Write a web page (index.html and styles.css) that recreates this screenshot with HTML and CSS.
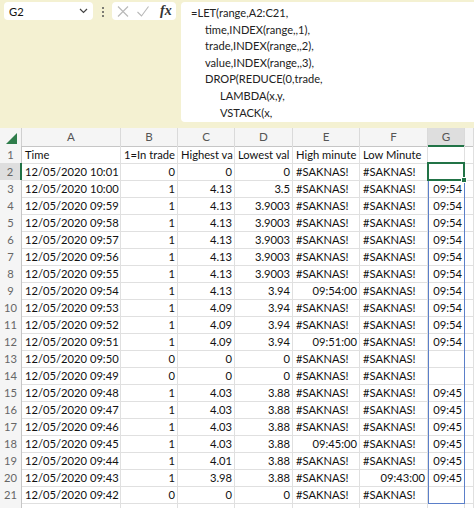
FILE: index.html
```html
<!DOCTYPE html>
<html lang="sv">
<head>
    <meta charset="UTF-8">
    <meta name="viewport" content="width=device-width, initial-scale=1.0">
    <title>Excel - LET / REDUCE</title>
    <link rel="stylesheet" href="styles.css">
</head>
<body>
    <!-- Formula bar -->
    <div class="formula-bar">
        <div class="name-box">
            <span>G2</span>
            <svg width="9" height="6" viewBox="0 0 9 6"><polyline points="1,1 4.5,4.5 8,1" fill="none" stroke="#444" stroke-width="1.2"/></svg>
        </div>
        <div class="dots"><i></i><i></i><i></i></div>
        <div class="fx-box">
            <svg class="icon-x" width="12" height="11" viewBox="0 0 12 11"><path d="M1 0.5 L11 10.5 M11 0.5 L1 10.5" stroke="#b8b8b8" stroke-width="1.1" fill="none"/></svg>
            <svg class="icon-ok" width="12" height="11" viewBox="0 0 12 11"><polyline points="0.5,6 4.5,10 11.5,0.5" stroke="#b8b8b8" stroke-width="1.1" fill="none"/></svg>
            <span class="fx">fx</span>
        </div>
        <div class="formula">
            <div>=LET(range,A2:C21,</div>
            <div class="in1">time,INDEX(range,,1),</div>
            <div class="in1">trade,INDEX(range,,2),</div>
            <div class="in1">value,INDEX(range,,3),</div>
            <div class="in1">DROP(REDUCE(0,trade,</div>
            <div class="in2">LAMBDA(x,y,</div>
            <div class="in2">VSTACK(x,</div>
        </div>
    </div>

    <!-- Sheet grid -->
    <div class="sheet">
        <div class="row head">
            <div class="corner"><svg width="11" height="11" viewBox="0 0 11 11"><polygon points="11,0 11,11 0,11" fill="#2f7d4b"/></svg></div>
            <div class="ch">A</div><div class="ch">B</div><div class="ch">C</div><div class="ch">D</div>
            <div class="ch">E</div><div class="ch">F</div><div class="ch active">G</div><div class="ch"></div>
        </div>
        <div class="row"><div class="rh">1</div><div class="c">Time</div><div class="c">1=In trade</div><div class="c">Highest va</div><div class="c">Lowest val</div><div class="c">High minute</div><div class="c">Low Minute</div><div class="c g"></div><div class="c"></div></div>
        <div class="row"><div class="rh active">2</div><div class="c n">12/05/2020 10:01</div><div class="c n">0</div><div class="c n">0</div><div class="c n">0</div><div class="c">#SAKNAS!</div><div class="c">#SAKNAS!</div><div class="c n g sp sel"></div><div class="c"></div></div>
        <div class="row"><div class="rh">3</div><div class="c n">12/05/2020 10:00</div><div class="c n">1</div><div class="c n">4.13</div><div class="c n">3.5</div><div class="c">#SAKNAS!</div><div class="c">#SAKNAS!</div><div class="c n g sp">09:54</div><div class="c"></div></div>
        <div class="row"><div class="rh">4</div><div class="c n">12/05/2020 09:59</div><div class="c n">1</div><div class="c n">4.13</div><div class="c n">3.9003</div><div class="c">#SAKNAS!</div><div class="c">#SAKNAS!</div><div class="c n g sp">09:54</div><div class="c"></div></div>
        <div class="row"><div class="rh">5</div><div class="c n">12/05/2020 09:58</div><div class="c n">1</div><div class="c n">4.13</div><div class="c n">3.9003</div><div class="c">#SAKNAS!</div><div class="c">#SAKNAS!</div><div class="c n g sp">09:54</div><div class="c"></div></div>
        <div class="row"><div class="rh">6</div><div class="c n">12/05/2020 09:57</div><div class="c n">1</div><div class="c n">4.13</div><div class="c n">3.9003</div><div class="c">#SAKNAS!</div><div class="c">#SAKNAS!</div><div class="c n g sp">09:54</div><div class="c"></div></div>
        <div class="row"><div class="rh">7</div><div class="c n">12/05/2020 09:56</div><div class="c n">1</div><div class="c n">4.13</div><div class="c n">3.9003</div><div class="c">#SAKNAS!</div><div class="c">#SAKNAS!</div><div class="c n g sp">09:54</div><div class="c"></div></div>
        <div class="row"><div class="rh">8</div><div class="c n">12/05/2020 09:55</div><div class="c n">1</div><div class="c n">4.13</div><div class="c n">3.9003</div><div class="c">#SAKNAS!</div><div class="c">#SAKNAS!</div><div class="c n g sp">09:54</div><div class="c"></div></div>
        <div class="row"><div class="rh">9</div><div class="c n">12/05/2020 09:54</div><div class="c n">1</div><div class="c n">4.13</div><div class="c n">3.94</div><div class="c n">09:54:00</div><div class="c">#SAKNAS!</div><div class="c n g sp">09:54</div><div class="c"></div></div>
        <div class="row"><div class="rh">10</div><div class="c n">12/05/2020 09:53</div><div class="c n">1</div><div class="c n">4.09</div><div class="c n">3.94</div><div class="c">#SAKNAS!</div><div class="c">#SAKNAS!</div><div class="c n g sp">09:54</div><div class="c"></div></div>
        <div class="row"><div class="rh">11</div><div class="c n">12/05/2020 09:52</div><div class="c n">1</div><div class="c n">4.09</div><div class="c n">3.94</div><div class="c">#SAKNAS!</div><div class="c">#SAKNAS!</div><div class="c n g sp">09:54</div><div class="c"></div></div>
        <div class="row"><div class="rh">12</div><div class="c n">12/05/2020 09:51</div><div class="c n">1</div><div class="c n">4.09</div><div class="c n">3.94</div><div class="c n">09:51:00</div><div class="c">#SAKNAS!</div><div class="c n g sp">09:54</div><div class="c"></div></div>
        <div class="row"><div class="rh">13</div><div class="c n">12/05/2020 09:50</div><div class="c n">0</div><div class="c n">0</div><div class="c n">0</div><div class="c">#SAKNAS!</div><div class="c">#SAKNAS!</div><div class="c n g sp"></div><div class="c"></div></div>
        <div class="row"><div class="rh">14</div><div class="c n">12/05/2020 09:49</div><div class="c n">0</div><div class="c n">0</div><div class="c n">0</div><div class="c">#SAKNAS!</div><div class="c">#SAKNAS!</div><div class="c n g sp"></div><div class="c"></div></div>
        <div class="row"><div class="rh">15</div><div class="c n">12/05/2020 09:48</div><div class="c n">1</div><div class="c n">4.03</div><div class="c n">3.88</div><div class="c">#SAKNAS!</div><div class="c">#SAKNAS!</div><div class="c n g sp">09:45</div><div class="c"></div></div>
        <div class="row"><div class="rh">16</div><div class="c n">12/05/2020 09:47</div><div class="c n">1</div><div class="c n">4.03</div><div class="c n">3.88</div><div class="c">#SAKNAS!</div><div class="c">#SAKNAS!</div><div class="c n g sp">09:45</div><div class="c"></div></div>
        <div class="row"><div class="rh">17</div><div class="c n">12/05/2020 09:46</div><div class="c n">1</div><div class="c n">4.03</div><div class="c n">3.88</div><div class="c">#SAKNAS!</div><div class="c">#SAKNAS!</div><div class="c n g sp">09:45</div><div class="c"></div></div>
        <div class="row"><div class="rh">18</div><div class="c n">12/05/2020 09:45</div><div class="c n">1</div><div class="c n">4.03</div><div class="c n">3.88</div><div class="c n">09:45:00</div><div class="c">#SAKNAS!</div><div class="c n g sp">09:45</div><div class="c"></div></div>
        <div class="row"><div class="rh">19</div><div class="c n">12/05/2020 09:44</div><div class="c n">1</div><div class="c n">4.01</div><div class="c n">3.88</div><div class="c">#SAKNAS!</div><div class="c">#SAKNAS!</div><div class="c n g sp">09:45</div><div class="c"></div></div>
        <div class="row"><div class="rh">20</div><div class="c n">12/05/2020 09:43</div><div class="c n">1</div><div class="c n">3.98</div><div class="c n">3.88</div><div class="c">#SAKNAS!</div><div class="c n">09:43:00</div><div class="c n g sp">09:45</div><div class="c"></div></div>
        <div class="row"><div class="rh">21</div><div class="c n">12/05/2020 09:42</div><div class="c n">0</div><div class="c n">0</div><div class="c n">0</div><div class="c">#SAKNAS!</div><div class="c">#SAKNAS!</div><div class="c n g sp last"></div><div class="c"></div></div>
        <div class="row"><div class="rh"></div><div class="c"></div><div class="c"></div><div class="c"></div><div class="c"></div><div class="c"></div><div class="c"></div><div class="c"></div><div class="c"></div></div>
    </div>
</body>
</html>
```

FILE: styles.css
```css
/* Page */
body {
    margin: 0;
    width: 474px;
    height: 508px;
    overflow: hidden;
    background: #fff;
    color: #111;
    font-family: Lato, 'Liberation Sans', sans-serif;
    font-size: 11.2px;
}
/* Formula bar */
.formula-bar {
    height: 128px;
    box-sizing: border-box;
    padding: 2px 0 0 4px;
    background: #f4f1d2;
    display: flex;
    align-items: flex-start;
}
.name-box {
    width: 89px;
    height: 18px;
    box-sizing: border-box;
    padding: 0 5px 0 5px;
    background: #fff;
    border-radius: 4px;
    display: flex;
    align-items: center;
    justify-content: space-between;
    flex-shrink: 0;
}
.dots {
    width: 19px;
    flex-shrink: 0;
    padding-top: 5px;
    display: flex;
    flex-direction: column;
    align-items: center;
    gap: 2px;
}
.dots i {
    width: 2px;
    height: 2px;
    background: #555;
    border-radius: 1px;
}
.fx-box {
    width: 64px;
    height: 18px;
    box-sizing: border-box;
    padding-left: 5px;
    background: #fff;
    border-radius: 4px;
    display: flex;
    align-items: center;
    flex-shrink: 0;
}
.icon-ok {
    margin-left: 8px;
}
.fx {
    margin-left: 11px;
    font-family: 'Liberation Serif', serif;
    font-style: italic;
    font-weight: bold;
    font-size: 14px;
    color: #333;
    line-height: 18px;
}
.formula {
    width: 310px;
    height: 120px;
    margin-left: 5px;
    flex-shrink: 0;
    box-sizing: border-box;
    padding: 3px 0 0 10px;
    background: #fff;
    border-radius: 4px;
    font-size: 11.1px;
    line-height: 16.6px;
    color: #222;
    white-space: nowrap;
}
.formula .in1 {
    padding-left: 14px;
}
.formula .in2 {
    padding-left: 29px;
}
/* Sheet grid */
.row {
    display: grid;
    grid-template-columns: 22px 99px 57px 57px 58px 67px 68px 37px 1fr;
    height: 17px;
}
.row.head {
    height: 18px;
}
.corner {
    background: #f5f5f5;
    border-right: 1px solid #d0d0d0;
    border-bottom: 1px solid #c6c6c6;
    display: flex;
    justify-content: flex-end;
    align-items: flex-end;
    padding: 0 4px 2px 0;
}
.ch {
    background: #f5f5f5;
    border-right: 1px solid #dadada;
    border-bottom: 1px solid #c6c6c6;
    text-align: center;
    color: #555;
    font-size: 11.6px;
    line-height: 18px;
}
.ch.active {
    background: #dedede;
    border-bottom: 2px solid #217346;
    line-height: 17px;
}
.rh {
    background: #f5f5f5;
    border-right: 1px solid #c6c6c6;
    border-bottom: 1px solid #dedede;
    text-align: center;
    color: #666;
    line-height: 17px;
}
.rh.active {
    background: #dedede;
    border-right: 2px solid #217346;
}
.c {
    border-right: 1px solid #e0e0e0;
    border-bottom: 1px solid #e0e0e0;
    padding: 0 2px 0 3px;
    line-height: 17px;
    white-space: nowrap;
    overflow: hidden;
}
.c.n {
    text-align: right;
}
/* Spill range and active cell in column G */
.c.g {
    position: relative;
    overflow: visible;
}
.c.sp {
    box-shadow: inset 1px 0 #5b7fc9;
    border-right-color: #5b7fc9;
}
.c.sp.last {
    border-bottom-color: #5b7fc9;
}
.c.sel {
    z-index: 2;
}
.c.sel::before {
    content: '';
    position: absolute;
    left: -1px;
    top: -1px;
    right: -1px;
    bottom: -1px;
    border: 2px solid #217346;
}
.c.sel::after {
    content: '';
    position: absolute;
    right: -3px;
    bottom: -3px;
    width: 4px;
    height: 4px;
    background: #217346;
    border: 1px solid #fff;
}
```
